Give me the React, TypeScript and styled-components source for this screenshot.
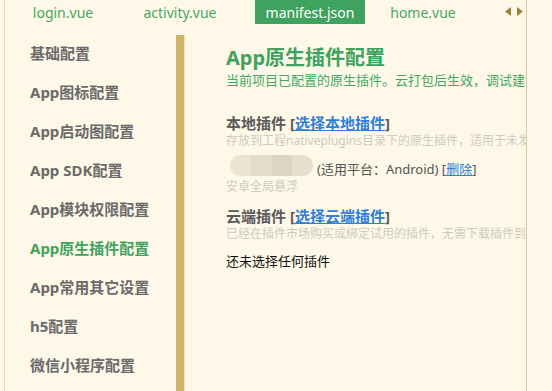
import React from 'react'
import styled, { createGlobalStyle } from 'styled-components'

const GlobalStyle = createGlobalStyle`
  html, body {
    margin: 0;
    padding: 0;
    background: #fdf8e7;
    font-family: 'Noto Sans', 'Noto Sans CJK SC', sans-serif;
  }
`

const Page = styled.div`
  width: 552px;
  height: 391px;
  display: flex;
  overflow: hidden;
  background: #fdf8e7;
`

const Main = styled.div`
  width: 521px;
  display: flex;
  flex-direction: column;
  margin-left: 4px;
  border-left: 1px solid #eadcae;
  border-right: 1px solid #d6c79f;
`

const TabBar = styled.div`
  height: 24px;
  display: flex;
  align-items: stretch;
  position: relative;
`

const Tab = styled.div<{ $w: number; $active?: boolean }>`
  width: ${(p) => p.$w}px;
  display: flex;
  align-items: center;
  justify-content: center;
  font-size: 14px;
  color: ${(p) => (p.$active ? '#fff' : '#45a862')};
  background: ${(p) => (p.$active ? '#3fa35f' : 'transparent')};
`

const Arrows = styled.div`
  position: absolute;
  right: 3px;
  top: 7px;
  display: flex;
  gap: 6px;
`

const Body = styled.div`
  flex: 1;
  display: flex;
  min-height: 0;
`

const Side = styled.div`
  width: 171px;
  padding-top: 9px;
  display: flex;
  flex-direction: column;
`

const SideItem = styled.div<{ $active?: boolean }>`
  height: 39px;
  padding-left: 25px;
  display: flex;
  align-items: center;
  font-size: 15px;
  font-weight: bold;
  color: ${(p) => (p.$active ? '#3fa35f' : '#6a6a6a')};
  white-space: nowrap;
`

const Scroll = styled.div`
  width: 8px;
  margin-top: 11px;
  background: #cdb469;
  border-right: 1px solid #efe2b4;
`

const Content = styled.div`
  flex: 1;
  padding: 21px 0 0 41px;
  overflow: hidden;
  white-space: nowrap;
`

const Title = styled.div`
  font-size: 20px;
  font-weight: bold;
  color: #3fa35f;
  line-height: 26px;
`

const Sub = styled.div`
  font-size: 13px;
  color: #45a862;
  line-height: 18px;
`

const Section = styled.div<{ $top: number }>`
  margin-top: ${(p) => p.$top}px;
  font-size: 15px;
  font-weight: bold;
  color: #5a5a5a;
  line-height: 18px;
`

const Link = styled.span`
  color: #2d7fd8;
  text-decoration: underline;
`

const Hint = styled.div`
  font-size: 12px;
  color: #cfcac0;
  line-height: 18px;
`

const PluginRow = styled.div`
  height: 23px;
  display: flex;
  align-items: flex-end;
  margin-top: 5px;
  font-size: 13px;
  line-height: 18px;
  color: #555;
`

const Blur = styled.div`
  width: 83px;
  height: 21px;
  margin: 0 4px 2px 4px;
  border-radius: 10px;
  background: linear-gradient(90deg, #ebe4d2 0 25%, #e4dcc8 25% 50%, #ddd5c1 50% 75%, #e6dfcd 75% 100%);
  filter: blur(0.6px);
`

const Empty = styled.div`
  margin-top: 9px;
  font-size: 13px;
  line-height: 18px;
  color: #111;
`

const sideItems = [
  '基础配置',
  'App图标配置',
  'App启动图配置',
  'App SDK配置',
  'App模块权限配置',
  'App原生插件配置',
  'App常用其它设置',
  'h5配置',
  '微信小程序配置',
]

export default function App() {
  return (
    <Page>
      <GlobalStyle />
      <Main>
        <TabBar>
          <Tab $w={116}>login.vue</Tab>
          <Tab $w={118}>activity.vue</Tab>
          <Tab $w={16} />
          <Tab $w={110} $active>
            manifest.json
          </Tab>
          <Tab $w={116}>home.vue</Tab>
          <Arrows>
            <svg width="6" height="9" viewBox="0 0 6 9">
              <path d="M6 0 L0 4.5 L6 9 Z" fill="#9c8436" />
            </svg>
            <svg width="6" height="9" viewBox="0 0 6 9">
              <path d="M0 0 L6 4.5 L0 9 Z" fill="#9c8436" />
            </svg>
          </Arrows>
        </TabBar>
        <Body>
          <Side>
            {sideItems.map((s) => (
              <SideItem key={s} $active={s === 'App原生插件配置'}>
                {s}
              </SideItem>
            ))}
          </Side>
          <Scroll />
          <Content>
            <Title>App原生插件配置</Title>
            <Sub>当前项目已配置的原生插件。云打包后生效，调试建议使用自定义基座</Sub>
            <Section $top={25}>
              本地插件 [<Link>选择本地插件</Link>]
            </Section>
            <Hint>存放到工程nativeplugins目录下的原生插件，适用于未发布到插件市场的插件</Hint>
            <PluginRow>
              <Blur />
              (适用平台：Android) [<Link>删除</Link>]
            </PluginRow>
            <Hint>安卓全局悬浮</Hint>
            <Section $top={11}>
              云端插件 [<Link>选择云端插件</Link>]
            </Section>
            <Hint>已经在插件市场购买或绑定试用的插件，无需下载插件到工程中</Hint>
            <Empty>还未选择任何插件</Empty>
          </Content>
        </Body>
      </Main>
    </Page>
  )
}
